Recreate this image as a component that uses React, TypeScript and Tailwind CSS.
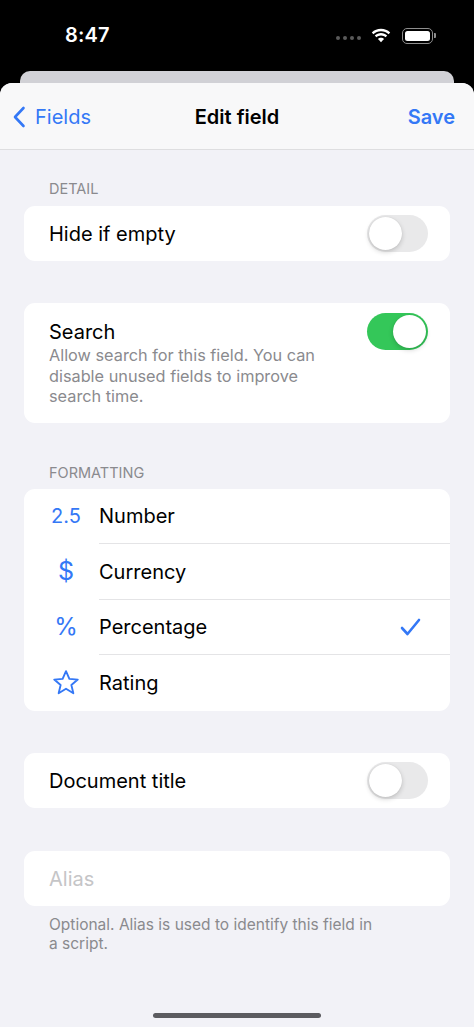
import React from 'react';

function Toggle({ on }: { on: boolean }) {
  return (
    <div
      className={
        on
          ? 'w-[61px] h-[37px] rounded-full bg-[#34c759] p-[2px] flex justify-end'
          : 'w-[61px] h-[37px] rounded-full bg-[#e9e9ea] p-[2px] flex justify-start'
      }
    >
      <div className="w-[33px] h-[33px] rounded-full bg-white shadow-[0_2px_5px_rgba(0,0,0,0.18),0_0_1px_rgba(0,0,0,0.12)]" />
    </div>
  );
}

function StarIcon() {
  return (
    <svg width="28" height="27" viewBox="0 0 24 23" fill="none" stroke="#3478f6" strokeWidth="1.6" strokeLinejoin="round">
      <path d="M12 1.8l2.9 6.6 7.2.6-5.5 4.7 1.7 7-6.3-3.8-6.3 3.8 1.7-7L1.9 9l7.2-.6z" />
    </svg>
  );
}

const formats = [
  { key: 'number', label: 'Number', icon: <span className="text-[20px] leading-none">2.5</span> },
  { key: 'currency', label: 'Currency', icon: <span className="text-[25px] leading-none">$</span> },
  { key: 'percentage', label: 'Percentage', icon: <span className="text-[24px] leading-none">%</span>, checked: true },
  { key: 'rating', label: 'Rating', icon: <StarIcon /> },
];

export default function App() {
  return (
    <div className="relative w-[474px] h-[1027px] bg-black flex flex-col overflow-hidden font-['Inter',sans-serif]">
      {/* Status bar */}
      <div className="h-[71px] flex items-center justify-between pl-[65px] pr-[38px] shrink-0">
        <span className="text-white text-[20px] font-semibold tracking-[0.2px] mb-[1px]">8:47</span>
        <div className="flex items-center">
          <div className="flex gap-[3px] mr-[10px] mt-[4px]">
            <div className="w-[4px] h-[4px] rounded-full bg-[#5a5a5a]" />
            <div className="w-[4px] h-[4px] rounded-full bg-[#5a5a5a]" />
            <div className="w-[4px] h-[4px] rounded-full bg-[#5a5a5a]" />
            <div className="w-[4px] h-[4px] rounded-full bg-[#5a5a5a]" />
          </div>
          <svg width="20" height="15" viewBox="0 0 20 15" className="mr-[11px]">
            <path d="M10 3.2c2.9 0 5.6 1.1 7.6 3l1.6-1.7C16.7 2.1 13.5.8 10 .8S3.3 2.1.8 4.5l1.6 1.7c2-1.9 4.7-3 7.6-3z" fill="white" />
            <path d="M10 7.5c1.8 0 3.4.7 4.6 1.8l1.6-1.7C14.6 6.1 12.4 5.1 10 5.1s-4.6 1-6.2 2.5l1.6 1.7C6.6 8.2 8.2 7.5 10 7.5z" fill="white" />
            <path d="M10 11.6c.7 0 1.3.3 1.8.7L10 14.2l-1.8-1.9c.5-.4 1.1-.7 1.8-.7z M10 9.8c1.2 0 2.3.5 3.1 1.2l-1.3 1.3L10 14.2l-1.8-1.9-1.3-1.3c.8-.7 1.900-1.2 3.1-1.2z" fill="white" />
          </svg>
          <div className="flex items-center">
            <div className="w-[31px] h-[16px] rounded-[5px] border-[1.5px] border-[#8e8e8e] p-[2px]">
              <div className="w-full h-full rounded-[2.5px] bg-white" />
            </div>
            <div className="w-[2px] h-[5px] rounded-r-[1px] bg-[#8e8e8e] ml-[1px]" />
          </div>
        </div>
      </div>

      {/* Sheet behind */}
      <div className="mx-[20px] h-[12px] rounded-t-[10px] bg-[#d1d1d6] shrink-0" />

      {/* Sheet */}
      <div className="flex-1 rounded-t-[12px] bg-[#f2f2f7] overflow-hidden flex flex-col">
        {/* Nav bar */}
        <div className="h-[67px] bg-[#f8f8f9] border-b border-[#dedee0] flex items-center justify-between px-[12px] shrink-0 relative">
          <div className="flex items-center text-[#3478f6] mt-[1px]">
            <svg width="14" height="22" viewBox="0 0 14 22" fill="none" stroke="#3478f6" strokeWidth="2.6" strokeLinecap="round" strokeLinejoin="round">
              <path d="M11.5 2L3 11l8.5 9" />
            </svg>
            <span className="text-[20px] ml-[9px]">Fields</span>
          </div>
          <span className="absolute left-1/2 -translate-x-1/2 mt-[1px] text-[20px] font-semibold text-black">Edit field</span>
          <span className="text-[20px] font-semibold text-[#3478f6] mr-[7px] mt-[1px]">Save</span>
        </div>

        {/* Content */}
        <div className="px-[24px]">
          <div className="pt-[30px] pb-[9px] pl-[25px] text-[14.5px] leading-[17px] text-[#8a8a8e]">DETAIL</div>
          <div className="h-[55px] bg-white rounded-[11px] flex items-center justify-between pl-[25px] pr-[22px]">
            <span className="text-[20px] text-black mt-[1px]">Hide if empty</span>
            <Toggle on={false} />
          </div>

          <div className="mt-[42px] bg-white rounded-[11px] flex justify-between pl-[25px] pr-[22px] pt-[10px] pb-[16px]">
            <div className="pt-[7px]">
              <div className="text-[20px] leading-[24px] text-black">Search</div>
              <div className="mt-[1px] text-[16.3px] leading-[20.5px] text-[#8a8a8e]">
                Allow search for this field. You can
                <br />
                disable unused fields to improve
                <br />
                search time.
              </div>
            </div>
            <Toggle on={true} />
          </div>

          <div className="mt-[41px] pb-[8px] pl-[25px] text-[14.5px] leading-[17px] text-[#8a8a8e]">FORMATTING</div>
          <div className="bg-white rounded-[11px] overflow-hidden">
            {formats.map((f, i) => (
              <div key={f.key} className="flex items-stretch h-[55.5px]">
                <div className="w-[50px] ml-[17px] mr-[8px] flex items-center justify-center text-[#3478f6]">{f.icon}</div>
                <div
                  className={
                    i < formats.length - 1
                      ? 'flex-1 flex items-center justify-between border-b border-[#e4e4e6] pr-[29px]'
                      : 'flex-1 flex items-center justify-between pr-[29px]'
                  }
                >
                  <span className="text-[20px] text-black mt-[1px]">{f.label}</span>
                  {f.checked && (
                    <svg width="21" height="18" viewBox="0 0 21 18" fill="none" stroke="#3478f6" strokeWidth="2.6" strokeLinecap="round" strokeLinejoin="round">
                      <path d="M2 10l5.5 6L19 2" />
                    </svg>
                  )}
                </div>
              </div>
            ))}
          </div>

          <div className="mt-[42px] h-[55px] bg-white rounded-[11px] flex items-center justify-between pl-[25px] pr-[22px]">
            <span className="text-[20px] text-black mt-[1px]">Document title</span>
            <Toggle on={false} />
          </div>

          <div className="mt-[43px] h-[55px] bg-white rounded-[11px] flex items-center pl-[25px] pr-[22px]">
            <span className="text-[20px] text-[#c5c5c7] mt-[1px]">Alias</span>
          </div>
          <div className="mt-[9px] pl-[25px] text-[15.5px] leading-[19.5px] text-[#8a8a8e]">
            Optional. Alias is used to identify this field in
            <br />
            a script.
          </div>
        </div>
      </div>

      {/* Home indicator */}
      <div className="absolute left-[153px] bottom-[9px] w-[168px] h-[5px] rounded-full bg-[#5c5c60]" />
    </div>
  );
}
